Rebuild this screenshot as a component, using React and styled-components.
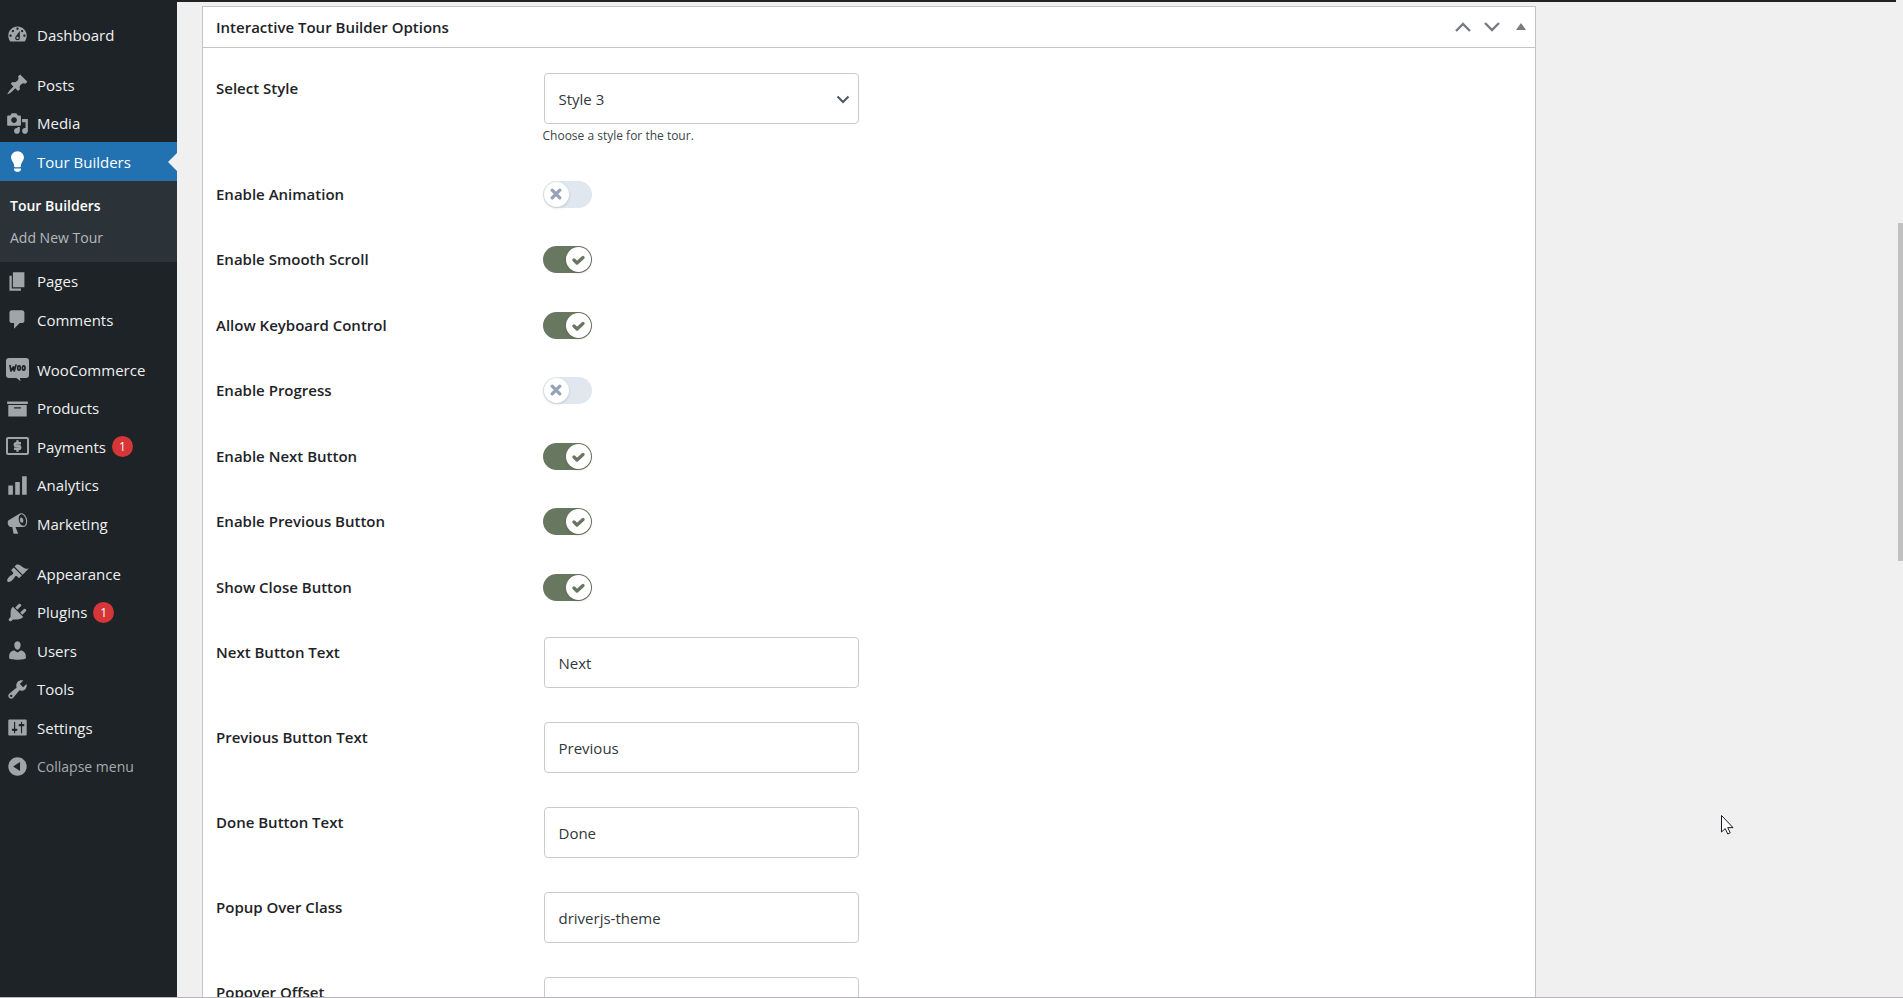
import React, { useState } from "react";
import styled, { createGlobalStyle, css } from "styled-components";

const GlobalStyle = createGlobalStyle`
  *, *::before, *::after { box-sizing: border-box; }
  body {
    margin: 0;
    background: #f0f0f0;
    color: #1d2327;
    font-family: "Segoe UI", "Open Sans", "Noto Sans", sans-serif;
    font-size: 15px;
  }
  ul { list-style: none; margin: 0; padding: 0; }
`;

const Shell = styled.div`
  display: flex;
  position: relative;
  height: 100vh;
  overflow: hidden;
  border-bottom: 1px solid #b9b7bd;
`;

const Sidebar = styled.nav`
  flex: none;
  width: 177px;
  padding-top: 15px;
  background: #1d2327;
  display: flex;
  flex-direction: column;
  gap: 11px;
`;

const MenuLink = styled.a`
  display: flex;
  align-items: center;
  position: relative;
  gap: 8px;
  height: 100%;
  padding-left: 6px;
  color: ${(p) => (p.$active ? "#fff" : p.$muted ? "#a7aaad" : "#f0f0f1")};
  background: ${(p) => (p.$active ? "#2271b1" : "transparent")};
  font-size: ${(p) => (p.$muted ? 14 : 15)}px;
  text-decoration: none;
  white-space: nowrap;

  svg {
    flex: none;
    width: 23px;
    height: 23px;
    fill: ${(p) => (p.$active ? "#fff" : "#a0a5aa")};
  }

  ${(p) =>
    p.$active &&
    css`
      &::after {
        content: "";
        position: absolute;
        right: 0;
        top: 50%;
        margin-top: -9px;
        border: 9px solid transparent;
        border-left-width: 0;
        border-right-color: #f0f0f0;
      }
    `}
`;

const MenuRow = styled.div`
  height: 38px;
`;

const MenuItem = styled.li`
  &:nth-child(odd) > ${MenuRow} {
    height: 39px;
  }
`;

const Count = styled.span`
  display: inline-flex;
  align-items: center;
  justify-content: center;
  width: 21px;
  height: 21px;
  margin-left: -2px;
  border-radius: 50%;
  background: #d63638;
  color: #fff;
  font-size: 12px;
`;

const SubMenu = styled.ul`
  padding: 9px 0 8px;
  background: #2c3338;
`;

const SubLink = styled.a`
  display: block;
  padding-left: 10px;
  line-height: 32px;
  font-size: 14px;
  font-weight: ${(p) => (p.$current ? 600 : 400)};
  color: ${(p) => (p.$current ? "#fff" : "#b4b9be")};
  text-decoration: none;
`;

const Page = styled.div`
  flex: 1;
  min-width: 0;
  display: flex;
  flex-direction: column;
`;

const AdminBar = styled.div`
  flex: none;
  height: 2px;
  background: #1d2327;
`;

const Content = styled.main`
  padding: 4px 360px 0 25px;
`;

const MetaBox = styled.section`
  background: #fff;
  border: 1px solid #c3c4c7;
`;

const BoxHeader = styled.header`
  display: flex;
  align-items: center;
  justify-content: space-between;
  height: 41px;
  padding-left: 13px;
  border-bottom: 1px solid #c3c4c7;
`;

const BoxTitle = styled.h2`
  margin: 0;
  font-size: 15px;
  font-weight: 600;
`;

const Actions = styled.div`
  display: flex;
`;

const ActionButton = styled.button`
  display: flex;
  align-items: center;
  justify-content: center;
  width: 29px;
  height: 32px;
  padding: 0;
  border: 0;
  background: none;
  color: #787c82;
`;

const Fields = styled.form`
  padding-top: 8px;
`;

const Field = styled.div`
  display: grid;
  grid-template-columns: 1fr 3fr;
  align-items: start;
  padding: 17px 13px 0;
  min-height: ${(p) => ({ select: 106, toggle: 65, text: 85 })[p.$kind]}px;

  &:nth-child(odd) {
    min-height: ${(p) => ({ select: 106, toggle: 66, text: 85 })[p.$kind]}px;
  }
`;

const FieldLabel = styled.label`
  padding-top: 2px;
  line-height: 27px;
  font-weight: 600;
`;

const boxed = css`
  display: block;
  width: 315px;
  height: 51px;
  margin-left: 1px;
  padding: 0 14px;
  border: 1px solid #c9cacc;
  border-radius: 4px;
  background: #fff;
  color: #32373c;
  font: inherit;
  outline: none;
`;

const TextInput = styled.input`
  ${boxed}
`;

const SelectWrap = styled.div`
  display: grid;
  width: 316px;
  align-items: center;

  > * { grid-area: 1 / 1; }
  > svg {
    justify-self: end;
    margin: 2px 9px 0 0;
    pointer-events: none;
  }
`;

const Select = styled.select`
  ${boxed}
  appearance: none;
`;

const Hint = styled.p`
  margin: 0;
  line-height: 24px;
  font-size: 12px;
  color: #3c434a;
`;

const Switch = styled.span`
  display: inline-grid;
  margin-top: 2px;
  width: 49px;
  height: 27px;

  > * { grid-area: 1 / 1; }
`;

const SwitchInput = styled.input`
  appearance: none;
  margin: 0;
  width: 49px;
  height: 27px;
  border-radius: 14px;
  background: ${(p) => (p.checked ? "#687860" : "#e1e7ef")};
`;

const Knob = styled.span`
  display: flex;
  align-items: center;
  justify-content: center;
  align-self: center;
  justify-self: ${(p) => (p.$on ? "end" : "start")};
  width: 25px;
  height: 25px;
  margin: 0 1px;
  border-radius: 50%;
  background: #fff;
  box-shadow: 0 1px 3px rgba(0, 0, 0, 0.15);
  pointer-events: none;
`;

const ScrollTrack = styled.div`
  flex: none;
  width: 7px;
  padding: 223px 0 0 2px;
`;

const ScrollThumb = styled.div`
  height: 338px;
  background: #c1c1c1;
`;

const Pointer = styled.svg`
  position: absolute;
  left: 1721px;
  top: 815px;
  width: 13px;
  height: 20px;
`;

const paths = {
  dashboard:
    "M3.76 16h12.48c1.1-1.37 1.76-3.11 1.76-5 0-4.42-3.58-8-8-8s-8 3.58-8 8c0 1.89.66 3.63 1.76 5zM10 4c.55 0 1 .45 1 1s-.45 1-1 1-1-.45-1-1 .45-1 1-1zM6 6c.55 0 1 .45 1 1s-.45 1-1 1-1-.45-1-1 .45-1 1-1zm8 0c.55 0 1 .45 1 1s-.45 1-1 1-1-.45-1-1 .45-1 1-1zm-5.37 5.55L12 7v6c0 1.1-.9 2-2 2s-2-.9-2-2c0-.57.24-1.08.63-1.45zM4 10c.55 0 1 .45 1 1s-.45 1-1 1-1-.45-1-1 .45-1 1-1zm12 0c.55 0 1 .45 1 1s-.45 1-1 1-1-.45-1-1 .45-1 1-1zm-5 3c0-.55-.45-1-1-1s-1 .45-1 1 .45 1 1 1 1-.45 1-1z",
  post: "M10.44 3.02l1.82-1.82 6.36 6.35-1.83 1.82c-1.05-.68-2.48-.57-3.41.36l-.75.75c-.92.93-1.04 2.35-.35 3.41l-1.83 1.82-2.41-2.41-2.8 2.79c-.42.42-3.38 2.71-3.8 2.29s1.86-3.39 2.28-3.81l2.79-2.79L4.1 9.36l1.83-1.82c1.05.69 2.48.57 3.4-.36l.75-.75c.93-.92 1.05-2.35.36-3.41z",
  media:
    "M13 11V4c0-.55-.45-1-1-1h-1.67L9 1H5L3.67 3H2c-.55 0-1 .45-1 1v7c0 .55.45 1 1 1h10c.55 0 1-.45 1-1zM7 4.5c1.38 0 2.5 1.12 2.5 2.5S8.38 9.5 7 9.5 4.5 8.38 4.5 7 5.62 4.5 7 4.5zM14 6h5v10.5c0 1.38-1.12 2.5-2.5 2.5S14 17.88 14 16.5s1.12-2.5 2.5-2.5c.17 0 .34.02.5.05V9h-3V6zm-4 8.05V13h2v3.5c0 1.38-1.12 2.5-2.5 2.5S7 17.88 7 16.5 8.12 14 9.5 14c.17 0 .34.02.5.05z",
  bulb: "M10 1c3.11 0 5.63 2.52 5.63 5.62 0 1.84-2.03 4.58-2.03 4.58-.33.44-.6 1.25-.6 1.8v1c0 .55-.45 1-1 1H8c-.55 0-1-.45-1-1v-1c0-.55-.27-1.36-.6-1.8 0 0-2.02-2.74-2.02-4.58C4.38 3.52 6.89 1 10 1zM7 16.87V16h6v.87c0 .62-.13 1.13-.75 1.13H12c0 .62-.4 1-1.02 1h-2c-.61 0-.98-.38-.98-1h-.25c-.62 0-.75-.51-.75-1.13z",
  page: "M6 15V2h10v13H6zm-1 1h8v2H3V5h2v11z",
  comments:
    "M5 2h9c1.1 0 2 .9 2 2v7c0 1.1-.9 2-2 2h-2l-5 5v-5H5c-1.1 0-2-.9-2-2V4c0-1.1.9-2 2-2z",
  archive: "M19 4v2H1V4h18zM2 7h16v10H2V7zm11 3V9H7v1h6z",
  chart: "M18 18V2h-4v16h4zm-6 0V7H8v11h4zm-6 0v-8H2v8h4z",
  megaphone:
    "M18.15 5.94c.46 1.62.38 3.22-.02 4.48-.42 1.28-1.26 2.18-2.3 2.48-.16.06-.26.06-.4.06-.06.02-.12.02-.18.02-.06.02-.14.02-.22.02h-6.8l2.22 5.5c.02.14-.06.26-.14.34-.08.1-.24.16-.34.16H6.95c-.1 0-.26-.06-.34-.16-.08-.08-.16-.2-.14-.34l-1-5.5H4.25l-.02-.02c-.5.06-1.08-.18-1.54-.62s-.88-1.08-1.06-1.88c-.24-.8-.2-1.56-.02-2.2.18-.62.58-1.08 1.06-1.3l.02-.02 9-5.4c.1-.06.18-.1.24-.16.06-.04.14-.08.24-.12.16-.08.28-.12.5-.18 1.04-.3 2.24.1 3.22.98s1.84 2.24 2.26 3.86zm-2.58 5.98h-.02c.4-.1.74-.34 1.04-.7.58-.7.86-1.76.86-3.04 0-.64-.1-1.3-.28-1.98-.34-1.36-1.02-2.5-1.78-3.24s-1.68-1.1-2.46-.88c-.82.22-1.4.96-1.7 2-.32 1.04-.28 2.36.06 3.72.38 1.36 1 2.5 1.8 3.24.78.74 1.62 1.1 2.48.88zm-2.54-7.08c.22-.04.42-.02.62.04.38.16.76.48 1.02 1s.42 1.2.42 1.78c0 .3-.04.56-.12.8-.18.48-.44.84-.86.94-.34.1-.8-.06-1.14-.4s-.64-.86-.78-1.5c-.18-.62-.12-1.24.02-1.72s.48-.84.82-.94z",
  appearance:
    "M14.48 11.06L7.41 3.99l1.5-1.5c.5-.56 2.3-.47 3.51.32 1.21.8 1.43 1.28 2.91 2.1 1.18.64 2.45 1.26 4.45.85zm-.71.71L6.7 4.7 4.93 6.47c-.39.39-.39 1.02 0 1.41l1.06 1.06c.39.39.39 1.03 0 1.42-.6.6-1.43 1.11-2.21 1.69-.35.26-.7.53-1.01.84C1.43 14.23.4 16.08 1.4 17.07c.99 1 2.84-.03 4.18-1.36.31-.31.58-.66.85-1.02.57-.78 1.08-1.61 1.69-2.21.39-.39 1.02-.39 1.41 0l1.06 1.06c.39.39 1.02.39 1.41 0z",
  plugins:
    "M13.11 4.36L9.87 7.6 8 5.73l3.24-3.24c.35-.34 1.05-.2 1.56.32.52.51.66 1.21.31 1.55zm-8 1.77l.91-1.12 9.01 9.01-1.19.84c-.71.71-2.63 1.16-3.82 1.16H6.14L4.9 17.26c-.59.59-1.54.59-2.12 0-.59-.58-.59-1.53 0-2.12l1.24-1.24v-3.88c0-1.13.4-3.19 1.09-3.89zm7.26 3.97l3.24-3.24c.34-.35 1.04-.21 1.55.31.52.51.66 1.21.31 1.55l-3.24 3.25z",
  users:
    "M10 9.25c-2.27 0-2.73-3.44-2.73-3.44C7 4.02 7.82 2 9.97 2c2.16 0 2.98 2.02 2.71 3.81 0 0-.41 3.44-2.68 3.44zm0 2.57L12.72 10c2.39 0 4.52 2.33 4.52 4.53v2.49s-3.65 1.13-7.24 1.13c-3.65 0-7.24-1.13-7.24-1.13v-2.49c0-2.25 1.94-4.48 4.47-4.48z",
  tools:
    "M16.68 9.77c-1.34 1.34-3.3 1.67-4.95.99l-5.41 6.52c-.99.99-2.59.99-3.58 0s-.99-2.59 0-3.57l6.52-5.42c-.68-1.65-.35-3.61.99-4.95 1.28-1.28 3.12-1.62 4.72-1.06l-2.89 2.89 2.82 2.82 2.86-2.87c.53 1.58.18 3.39-1.08 4.65zM3.81 16.21c.4.39 1.04.39 1.43 0 .4-.4.4-1.04 0-1.43-.39-.4-1.03-.4-1.43 0-.39.39-.39 1.03 0 1.43z",
  settings:
    "M18 16V4c0-.55-.45-1-1-1H3c-.55 0-1 .45-1 1v12c0 .55.45 1 1 1h14c.55 0 1-.45 1-1zM8 11h1c.55 0 1 .45 1 1s-.45 1-1 1H8v1.5c0 .28-.22.5-.5.5s-.5-.22-.5-.5V13H6c-.55 0-1-.45-1-1s.45-1 1-1h1V5.5c0-.28.22-.5.5-.5s.5.22.5.5V11zm5-2h-1c-.55 0-1-.45-1-1s.45-1 1-1h1V5.5c0-.28.22-.5.5-.5s.5.22.5.5V7h1c.55 0 1 .45 1 1s-.45 1-1 1h-1v5.5c0 .28-.22.5-.5.5s-.5-.22-.5-.5V9z",
  collapse:
    "M10 2c4.42 0 8 3.58 8 8s-3.58 8-8 8-8-3.58-8-8 3.58-8 8-8zM12.2 6L6.2 10l6 4z",
};

function MenuIcon({ name }) {
  if (name === "woo") {
    return (
      <svg viewBox="0 0 23 23" aria-hidden="true">
        <path d="M3 0h17a3 3 0 0 1 3 3v14a3 3 0 0 1-3 3h-6l.5 3.2L10.500 20H3a3 3 0 0 1-3-3V3a3 3 0 0 1 3-3z" />
        <g fill="none" stroke="#1d2327" strokeWidth="1.7" strokeLinecap="round" strokeLinejoin="round">
          <path d="M4 7.500l1 5.500 2.300-4.200.9 4.200L10 7" />
          <ellipse cx="13" cy="10" rx="1.3" ry="2.1" />
          <ellipse cx="17.7" cy="10" rx="1.3" ry="2.1" />
        </g>
      </svg>
    );
  }
  if (name === "payments") {
    return (
      <svg viewBox="0 0 23 23" aria-hidden="true">
        <rect x="1" y="3" width="21" height="16" rx="1" fill="none" stroke="#a0a5aa" strokeWidth="2" />
        <path
          d="M15 8.200h-4.800a1.400 1.400 0 0 0 0 2.800h2.600a1.400 1.400 0 0 1 0 2.800H8M11.500 5.200v3M11.500 13.800v3"
          fill="none"
          stroke="#a0a5aa"
          strokeWidth="2.4"
        />
      </svg>
    );
  }
  return (
    <svg viewBox="0 0 20 20" aria-hidden="true">
      <path fillRule="evenodd" d={paths[name]} />
    </svg>
  );
}

const menu = [
  [{ icon: "dashboard", text: "Dashboard" }],
  [
    { icon: "post", text: "Posts" },
    { icon: "media", text: "Media" },
    { icon: "bulb", text: "Tour Builders", active: true, children: ["Tour Builders", "Add New Tour"] },
    { icon: "page", text: "Pages" },
    { icon: "comments", text: "Comments" },
  ],
  [
    { icon: "woo", text: "WooCommerce" },
    { icon: "archive", text: "Products" },
    { icon: "payments", text: "Payments", count: 1 },
    { icon: "chart", text: "Analytics" },
    { icon: "megaphone", text: "Marketing" },
  ],
  [
    { icon: "appearance", text: "Appearance" },
    { icon: "plugins", text: "Plugins", count: 1 },
    { icon: "users", text: "Users" },
    { icon: "tools", text: "Tools" },
    { icon: "settings", text: "Settings" },
    { icon: "collapse", text: "Collapse menu", muted: true },
  ],
];

const fields = [
  { id: "style", kind: "select", label: "Select Style", value: "Style 3", hint: "Choose a style for the tour." },
  { id: "animation", kind: "toggle", label: "Enable Animation", value: false },
  { id: "smooth", kind: "toggle", label: "Enable Smooth Scroll", value: true },
  { id: "keyboard", kind: "toggle", label: "Allow Keyboard Control", value: true },
  { id: "progress", kind: "toggle", label: "Enable Progress", value: false },
  { id: "next", kind: "toggle", label: "Enable Next Button", value: true },
  { id: "previous", kind: "toggle", label: "Enable Previous Button", value: true },
  { id: "close", kind: "toggle", label: "Show Close Button", value: true },
  { id: "next-text", kind: "text", label: "Next Button Text", value: "Next" },
  { id: "previous-text", kind: "text", label: "Previous Button Text", value: "Previous" },
  { id: "done-text", kind: "text", label: "Done Button Text", value: "Done" },
  { id: "popup-class", kind: "text", label: "Popup Over Class", value: "driverjs-theme" },
  { id: "offset", kind: "text", label: "Popover Offset", value: "" },
];

function Toggle({ id, initial }) {
  const [on, setOn] = useState(initial);
  return (
    <Switch>
      <SwitchInput id={id} type="checkbox" checked={on} onChange={() => setOn(!on)} />
      <Knob $on={on}>
        <svg width="13" height="13" viewBox="0 0 13 13" fill="none" strokeWidth="3.3" strokeLinecap="round" strokeLinejoin="round">
          {on ? (
            <path d="M2 7l3 3 6-5.500" stroke="#687860" />
          ) : (
            <path d="M2.200 2.200l7.600 7.600M9.800 2.200l-7.600 7.600" stroke="#94a3b8" />
          )}
        </svg>
      </Knob>
    </Switch>
  );
}

function Control({ field }) {
  if (field.kind === "toggle") return <Toggle id={field.id} initial={field.value} />;
  if (field.kind === "text") return <TextInput id={field.id} type="text" defaultValue={field.value} />;
  return (
    <div>
      <SelectWrap>
        <Select id={field.id} defaultValue={field.value}>
          <option>{field.value}</option>
        </Select>
        <svg width="14" height="9" viewBox="0 0 14 9" fill="none" stroke="#50575e" strokeWidth="2">
          <path d="M1.500 1.500L7 7l5.500-5.500" />
        </svg>
      </SelectWrap>
      <Hint>{field.hint}</Hint>
    </div>
  );
}

export default function App() {
  return (
    <>
      <GlobalStyle />
      <Shell>
        <Sidebar aria-label="Main menu">
          {menu.map((group) => (
            <ul key={group[0].text}>
              {group.map((item) => (
                <MenuItem key={item.text}>
                  <MenuRow>
                    <MenuLink href="#" $active={item.active} $muted={item.muted}>
                      <MenuIcon name={item.icon} />
                      <span>{item.text}</span>
                      {item.count && <Count>{item.count}</Count>}
                    </MenuLink>
                  </MenuRow>
                  {item.children && (
                    <SubMenu>
                      {item.children.map((child, i) => (
                        <li key={child}>
                          <SubLink href="#" $current={i === 0}>{child}</SubLink>
                        </li>
                      ))}
                    </SubMenu>
                  )}
                </MenuItem>
              ))}
            </ul>
          ))}
        </Sidebar>
        <Page>
          <AdminBar />
          <Content>
            <MetaBox>
              <BoxHeader>
                <BoxTitle>Interactive Tour Builder Options</BoxTitle>
                <Actions>
                  <ActionButton type="button" aria-label="Move up">
                    <svg width="16" height="10" viewBox="0 0 16 10" fill="none" stroke="currentColor" strokeWidth="2.4">
                      <path d="M1 9l7-7 7 7" />
                    </svg>
                  </ActionButton>
                  <ActionButton type="button" aria-label="Move down">
                    <svg width="16" height="10" viewBox="0 0 16 10" fill="none" stroke="currentColor" strokeWidth="2.4">
                      <path d="M1 1l7 7 7-7" />
                    </svg>
                  </ActionButton>
                  <ActionButton type="button" aria-label="Toggle panel">
                    <svg width="10" height="8" viewBox="0 0 10 8" fill="currentColor">
                      <path d="M0 7L5 0l5 7z" />
                    </svg>
                  </ActionButton>
                </Actions>
              </BoxHeader>
              <Fields>
                {fields.map((field) => (
                  <Field key={field.id} $kind={field.kind}>
                    <FieldLabel htmlFor={field.id}>{field.label}</FieldLabel>
                    <Control field={field} />
                  </Field>
                ))}
              </Fields>
            </MetaBox>
          </Content>
        </Page>
        <ScrollTrack>
          <ScrollThumb />
        </ScrollTrack>
        <Pointer viewBox="0 0 13 20" aria-hidden="true">
          <path d="M.5.500v16.500l3.700-3.400 2.600 5.400 2.400-1.200-2.500-5.200h5.300z" fill="#fff" stroke="#1c1826" />
        </Pointer>
      </Shell>
    </>
  );
}
